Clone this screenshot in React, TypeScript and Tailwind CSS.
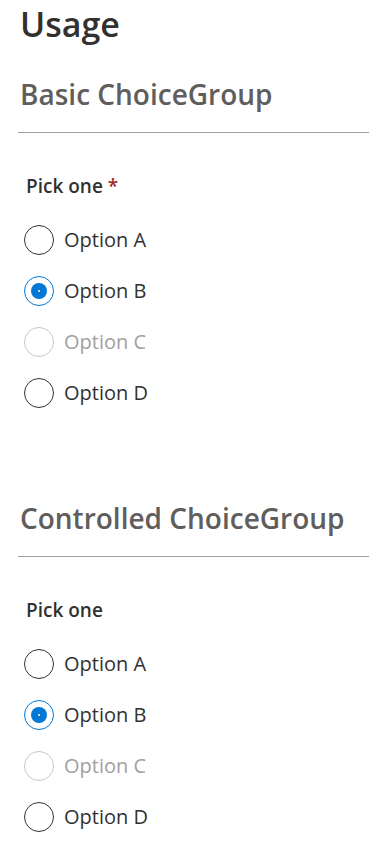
import React from "react";

type Opt = { label: string; state: "off" | "on" | "disabled" };

const options: Opt[] = [
  { label: "Option A", state: "off" },
  { label: "Option B", state: "on" },
  { label: "Option C", state: "disabled" },
  { label: "Option D", state: "off" },
];

function Radio({ state }: { state: Opt["state"] }) {
  if (state === "on") {
    return (
      <span className="relative flex h-[30px] w-[30px] shrink-0 items-center justify-center rounded-full border border-[#0078d4]">
        <span className="flex h-[16px] w-[16px] items-center justify-center rounded-full bg-[#0078d4]">
          <span className="h-[2px] w-[2px] rounded-full bg-white" />
        </span>
      </span>
    );
  }
  return (
    <span
      className={
        state === "disabled"
          ? "h-[30px] w-[30px] shrink-0 rounded-full border border-[#c8c6c4]"
          : "h-[30px] w-[30px] shrink-0 rounded-full border-[1.5px] border-[#323130]"
      }
    />
  );
}

function Group({ title, required }: { title: string; required?: boolean }) {
  return (
    <section>
      <h2 className="ml-[2px] text-[28px] font-semibold leading-[36px] text-[#605e5c]">{title}</h2>
      <div className="mt-[20px] h-px bg-[#a19f9d]" />
      <div className="mt-[39px] ml-[8px] text-[19px] font-semibold leading-[28px] text-[#323130]">
        Pick one{required && <span className="ml-[5px] text-[#a4262c]">*</span>}
      </div>
      <div className="mt-[25px] ml-[6px] flex flex-col gap-[21px]">
        {options.map((o) => (
          <div key={o.label} className="flex items-center gap-[10px]">
            <Radio state={o.state} />
            <span
              className={
                "text-[20px] leading-[30px] " +
                (o.state === "disabled" ? "text-[#a19f9d]" : "text-[#323130]")
              }
            >
              {o.label}
            </span>
          </div>
        ))}
      </div>
    </section>
  );
}

export default function App() {
  return (
    <div
      className="min-h-[846px] bg-white pl-[18px] pt-[2px]"
      style={{ fontFamily: '"Segoe UI", "Open Sans", "Noto Sans", sans-serif' }}
    >
      <h1 className="ml-[2px] text-[34px] font-semibold leading-[44px] text-[#323130]">Usage</h1>
      <div className="mt-[30px]">
        <Group title="Basic ChoiceGroup" required />
      </div>
      <div className="mt-[92px]">
        <Group title="Controlled ChoiceGroup" />
      </div>
    </div>
  );
}
